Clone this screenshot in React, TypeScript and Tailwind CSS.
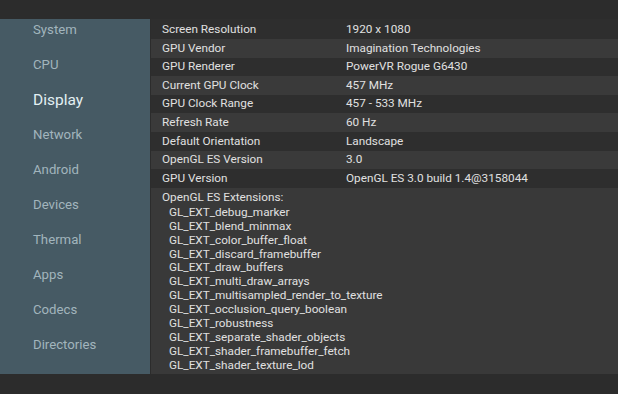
import React from "react";

const rows: [string, string][] = [
  ["Screen Resolution", "1920 x 1080"],
  ["GPU Vendor", "Imagination Technologies"],
  ["GPU Renderer", "PowerVR Rogue G6430"],
  ["Current GPU Clock", "457 MHz"],
  ["GPU Clock Range", "457 - 533 MHz"],
  ["Refresh Rate", "60 Hz"],
  ["Default Orientation", "Landscape"],
  ["OpenGL ES Version", "3.0"],
  ["GPU Version", "OpenGL ES 3.0 build 1.4@3158044"],
];

const exts = [
  "GL_EXT_debug_marker",
  "GL_EXT_blend_minmax",
  "GL_EXT_color_buffer_float",
  "GL_EXT_discard_framebuffer",
  "GL_EXT_draw_buffers",
  "GL_EXT_multi_draw_arrays",
  "GL_EXT_multisampled_render_to_texture",
  "GL_EXT_occlusion_query_boolean",
  "GL_EXT_robustness",
  "GL_EXT_separate_shader_objects",
  "GL_EXT_shader_framebuffer_fetch",
  "GL_EXT_shader_texture_lod",
];

const nav = ["System", "CPU", "Display", "Network", "Android", "Devices", "Thermal", "Apps", "Codecs", "Directories"];

export default function App() {
  return (
    <div
      className="w-[618px] h-[394px] bg-[#2c2c2c] flex pt-[19px] pb-[20px] overflow-hidden"
      style={{ fontFamily: "Roboto, 'Liberation Sans', sans-serif" }}
    >
      <div className="w-[150px] shrink-0 bg-[#465a64] flex flex-col gap-[15px] pt-[1px] pl-[33px]">
        {nav.map((n) =>
          n === "Display" ? (
            <div key={n} className="leading-[20px] h-[20px] text-[15.5px] text-[#e3f0f3]">
              {n}
            </div>
          ) : (
            <div key={n} className="leading-[20px] h-[20px] text-[13.2px] text-[#a2b5bd]">
              {n}
            </div>
          )
        )}
      </div>
      <div className="flex-1 ml-[1px] flex flex-col text-[11.75px] text-[#e0e0e0]">
        <div className="pt-[1.5px] bg-[#2e2e2e]"></div>
        {rows.map(([k, v], i) => (
          <div
            key={k}
            className={
              "h-[18.6px] flex items-center pl-[11px] " + (i % 2 === 1 ? "bg-[#3a3a3a]" : "bg-[#2e2e2e]")
            }
          >
            <div className="w-[184px] shrink-0">{k}</div>
            <div>{v}</div>
          </div>
        ))}
        <div className="flex-1 bg-[#393939] pl-[11px] pt-[2px]">
          <div className="leading-[14px] h-[16px]">OpenGL ES Extensions:</div>
          {exts.map((e) => (
            <div key={e} className="leading-[13.9px] pl-[7px]">
              {e}
            </div>
          ))}
        </div>
      </div>
    </div>
  );
}
